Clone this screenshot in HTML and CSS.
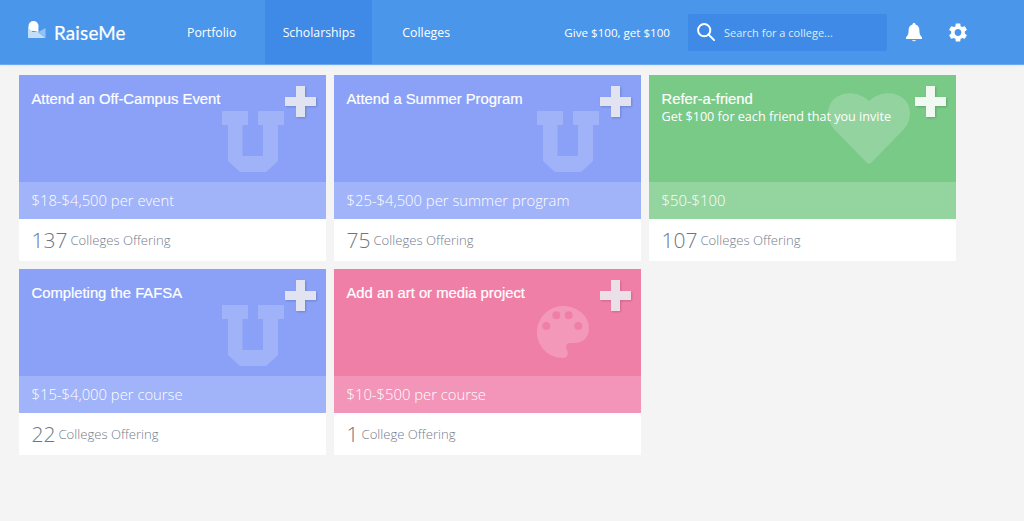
FILE: index.html
```html
<!DOCTYPE html>
<html lang="en">
    <head>
        <meta charset="UTF-8" />
        <meta name="viewport" content="width=device-width, initial-scale=1.0" />
        <title>RaiseMe</title>
        <link rel="stylesheet" href="styles.css">
    </head>
    <body>
        <!-- header -->
        <header class="top-bar">
            <a class="logo">
                <svg class="logo-icon" width="18" height="17" viewBox="0 0 18 17">
                    <path d="M0 6H4V11H10L17.500 17H0Z" fill="#c3def9"/>
                    <path d="M10.500 11 17.500 7V17Z" fill="#93c3f3"/>
                    <circle cx="5.500" cy="5" r="5" fill="#fff"/>
                    <path d="M3 9.300 10.500 11 10.300 5Z" fill="#fff"/>
                </svg>
                <span class="logo-text">RaiseMe</span>
            </a>
            <nav class="nav">
                <a class="nav-item">Portfolio</a>
                <a class="nav-item active">Scholarships</a>
                <a class="nav-item">Colleges</a>
            </nav>
            <a class="invite">Give $100, get $100</a>
            <div class="search">
                <svg width="18" height="18" viewBox="0 0 20 20" fill="none" stroke="#fff" stroke-width="2.200">
                    <circle cx="8" cy="8" r="6.800"/>
                    <path d="M12.800 12.800 19 19" stroke-linecap="round"/>
                </svg>
                <span>Search for a college...</span>
            </div>
            <svg class="bell" width="16" height="19" viewBox="0 0 16 19" fill="#fff">
                <path d="M8 0a1.400 1.400 0 0 1 1.400 1.600C12 2.300 13.400 4.500 13.400 7.500c0 3.500.8 5 2.600 6.800V16H0v-1.700C1.800 12.500 2.600 11 2.600 7.500c0-3 1.400-5.200 4-5.900A1.400 1.400 0 0 1 8 0Z"/>
                <path d="M5.800 17.200h4.400A2.300 1.600 0 0 1 5.800 17.200Z"/>
            </svg>
            <svg class="gear" width="18" height="19" viewBox="2.500 2 19 20" fill="#fff">
                <path d="M19.140 12.940c.04-.3.06-.61.06-.94 0-.32-.02-.64-.07-.94l2.030-1.580c.18-.14.23-.41.12-.61l-1.920-3.320c-.12-.22-.37-.29-.59-.22l-2.390.96c-.5-.38-1.030-.7-1.620-.94l-.36-2.540c-.04-.24-.24-.41-.48-.41h-3.840c-.24 0-.43.17-.47.41l-.36 2.540c-.59.24-1.130.57-1.620.94l-2.390-.96c-.22-.08-.47 0-.59.22L2.740 8.870c-.12.21-.08.47.12.61l2.030 1.580c-.05.3-.09.63-.09.94s.02.64.07.94l-2.030 1.580c-.18.14-.23.41-.12.61l1.920 3.320c.12.22.37.29.59.22l2.390-.96c.5.38 1.030.7 1.620.94l.36 2.540c.05.24.24.41.48.41h3.840c.24 0 .44-.17.47-.41l.36-2.540c.59-.24 1.130-.56 1.620-.94l2.390.96c.22.08.47 0 .59-.22l1.920-3.320c.12-.22.07-.47-.12-.61l-2.010-1.580zM12 15.600c-1.980 0-3.600-1.620-3.600-3.600s1.620-3.600 3.600-3.600 3.600 1.620 3.600 3.600-1.620 3.600-3.600 3.600z"/>
            </svg>
        </header>

        <!-- cards -->
        <main class="card-grid">
            <article class="card blue">
                <div class="card-top">
                    <h3>Attend an Off-Campus Event</h3>
                    <svg class="mark mark-u" width="62" height="61" viewBox="0 0 62 61"><path d="M0 0H26V14H20.500V45H41V14H36V0H62V14H56V50L44 61H18L6 50V14H0Z"/></svg>
                    <div class="plus"></div>
                </div>
                <div class="card-amount">$18-$4,500 per event</div>
                <div class="card-foot"><b>137</b> Colleges Offering</div>
            </article>
            <article class="card blue">
                <div class="card-top">
                    <h3>Attend a Summer Program</h3>
                    <svg class="mark mark-u" width="62" height="61" viewBox="0 0 62 61"><path d="M0 0H26V14H20.500V45H41V14H36V0H62V14H56V50L44 61H18L6 50V14H0Z"/></svg>
                    <div class="plus"></div>
                </div>
                <div class="card-amount">$25-$4,500 per summer program</div>
                <div class="card-foot"><b>75</b> Colleges Offering</div>
            </article>
            <article class="card green">
                <div class="card-top">
                    <h3>Refer-a-friend</h3>
                    <p>Get $100 for each friend that you invite</p>
                    <svg class="mark mark-heart" width="82" height="71" viewBox="0 0 82 71"><path d="M38.500 69.500 6 36C-2 27-2 13 6 6 15-2 30-2 41 8 52-2 67-2 76 6 84 13 84 27 76 36L43.500 69.500Q41 72 38.500 69.500Z"/></svg>
                    <div class="plus"></div>
                </div>
                <div class="card-amount">$50-$100</div>
                <div class="card-foot"><b>107</b> Colleges Offering</div>
            </article>
            <article class="card blue">
                <div class="card-top">
                    <h3>Completing the FAFSA</h3>
                    <svg class="mark mark-u" width="62" height="61" viewBox="0 0 62 61"><path d="M0 0H26V14H20.500V45H41V14H36V0H62V14H56V50L44 61H18L6 50V14H0Z"/></svg>
                    <div class="plus"></div>
                </div>
                <div class="card-amount">$15-$4,000 per course</div>
                <div class="card-foot"><b>22</b> Colleges Offering</div>
            </article>
            <article class="card pink">
                <div class="card-top">
                    <h3>Add an art or media project</h3>
                    <svg class="mark mark-palette" width="52" height="52" viewBox="0 0 52 52"><path fill-rule="evenodd" d="M26 0C40 0 52 10 52 22 52 31 46 37 38 37H33C29 37 28 41 30 44 32 48 30 52 26 52 11 52 0 40 0 26 0 12 12 0 26 0ZM19.300 5.300A4 4 0 1 0 19.300 13.300 4 4 0 0 0 19.300 5.300ZM31.700 5.300A4 4 0 1 0 31.700 13.300 4 4 0 0 0 31.700 5.300ZM9.300 16A4 4 0 1 0 9.300 24 4 4 0 0 0 9.300 16ZM41.300 16A4 4 0 1 0 41.300 24 4 4 0 0 0 41.300 16Z"/></svg>
                    <div class="plus"></div>
                </div>
                <div class="card-amount">$10-$500 per course</div>
                <div class="card-foot"><b>1</b> College Offering</div>
            </article>
        </main>
    </body>
</html>
```

FILE: styles.css
```css
* {
    margin: unset;
    padding: unset;
    box-sizing: border-box;
}
html,
body {
    height: 100%;
}
body {
    background-color: #f4f4f4;
    font-family: "Open Sans", "Liberation Sans", sans-serif;
    overflow: hidden;
}

/* header */
.top-bar {
    display: flex;
    align-items: center;
    height: 65px;
    padding-left: 28px;
    background-color: #4a96eb;
    border-bottom: 1px solid #69a9f0;
    box-shadow: 0 1px 2px rgba(0, 0, 0, 0.06);
    color: #fff;
    font-size: 12.300px;
    font-weight: 500;
}
.logo {
    display: flex;
    align-items: center;
    width: 159px;
    gap: 8px;
}
.logo-icon {
    margin-top: -5px;
}
.logo-text {
    font-family: "Lato", sans-serif;
    font-size: 18.800px;
    font-weight: 400;
    letter-spacing: 0.2px;
    -webkit-text-stroke: 0.2px #fff;
}
.nav {
    display: flex;
    align-self: stretch;
}
.nav-item {
    display: flex;
    align-items: center;
    padding-right: 29px;
    height: 100%;
}
.nav-item.active {
    width: 107px;
    justify-content: center;
    padding: 0;
    background-color: #3e8ae6;
}
.active + .nav-item {
    padding-left: 30px;
}
.invite {
    margin-left: auto;
    margin-right: 18px;
    font-size: 11.600px;
}
.search {
    display: flex;
    align-items: center;
    gap: 9px;
    width: 199px;
    height: 37px;
    padding-left: 9px;
    margin-right: 19px;
    background-color: #3e8ae6;
    border-radius: 2px;
    font-size: 11px;
    font-weight: 400;
    color: #dcebfb;
}
.bell {
    margin-right: 27px;
}
.gear {
    margin-right: 57px;
}

/* cards */
.card-grid {
    display: grid;
    grid-template-columns: repeat(3, 307px);
    grid-auto-rows: 186px;
    gap: 8px;
    padding: 10px 0 0 19px;
}
.card {
    display: flex;
    flex-direction: column;
    background-color: #fff;
}
.card-top {
    position: relative;
    height: 107px;
    padding: 16px 12.500px 0;
    color: #fff;
}
.card-top h3 {
    font-family: "Liberation Sans", sans-serif;
    font-size: 14.800px;
    font-weight: 400;
    line-height: 17px;
    -webkit-text-stroke: 0.2px #fff;
}
.card-top p {
    font-size: 12.600px;
    line-height: 17px;
}
.mark {
    position: absolute;
    fill: rgba(255, 255, 255, 0.2);
}
.mark-u {
    left: 203px;
    top: 36px;
}
.mark-heart {
    left: 179px;
    top: 18px;
}
.mark-palette {
    left: 203px;
    top: 37px;
}
.plus {
    position: absolute;
    right: 10px;
    top: 11px;
    width: 31px;
    height: 31px;
    background:
        linear-gradient(#ebebf0, #ebebf0) center / 9px 100% no-repeat,
        linear-gradient(#ebebf0, #ebebf0) center / 100% 9px no-repeat;
    opacity: 0.9;
    filter: drop-shadow(1px 1px 1px rgba(0, 0, 0, 0.2));
}
.green .plus {
    background:
        linear-gradient(#fff, #fff) center / 9px 100% no-repeat,
        linear-gradient(#fff, #fff) center / 100% 9px no-repeat;
}
.card-amount {
    height: 37px;
    padding-left: 12.500px;
    font-size: 14.800px;
    font-weight: 300;
    line-height: 36px;
    color: #fff;
}
.card-foot {
    display: flex;
    align-items: center;
    gap: 3px;
    height: 42px;
    padding-left: 12.500px;
    font-size: 13.100px;
    font-weight: 300;
    color: #737d8c;
}
.card-foot b {
    font-size: 21px;
    font-weight: 300;
    color: #6c7685;
}
.blue .card-top {
    background-color: #8aa1f7;
}
.blue .card-amount {
    background-color: #a1b3f9;
}
.green .card-top {
    background-color: #79c987;
}
.green .card-amount {
    background-color: #94d49f;
}
.pink .card-top {
    background-color: #f07fa7;
}
.pink .card-amount {
    background-color: #f295b8;
}
```
